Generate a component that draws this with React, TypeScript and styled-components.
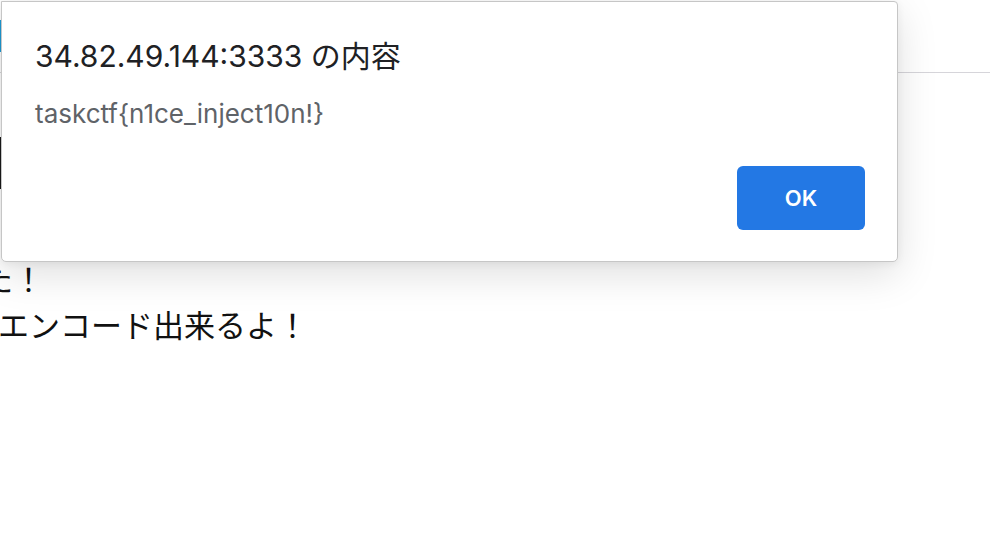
import styled, { createGlobalStyle } from 'styled-components'

const GlobalStyle = createGlobalStyle`
    html, body {
        margin: 0;
        padding: 0;
        background: #ffffff;
    }
    body {
        width: 990px;
        height: 534px;
        overflow: hidden;
        font-family: Inter, 'Noto Sans CJK JP', sans-serif;
    }
`

const FONT = `Inter, 'Noto Sans CJK JP', sans-serif`

export default function App() {
    return (
        <>
            <GlobalStyle />
            <Page>
                <Header>
                    <Logo />
                </Header>
                <Content>
                    <Heading />
                    <Line indent={-80}>できた！</Line>
                    <Line indent={-64}>全部エンコード出来るよ！</Line>
                </Content>
                <Dialog role="alertdialog">
                    <Title>34.82.49.144:3333 の内容</Title>
                    <Message>taskctf{'{'}n1ce_inject10n!{'}'}</Message>
                    <Actions>
                        <OkButton>OK</OkButton>
                    </Actions>
                </Dialog>
            </Page>
        </>
    )
}

const Page = styled.div`
    position: relative;
    width: 990px;
    height: 534px;
    overflow: hidden;
`

const Header = styled.header`
    height: 73px;
    border-bottom: 1.5px solid #d6d5da;
    display: flex;
    align-items: flex-start;
    padding-top: 20px;
    box-sizing: border-box;
`

const Logo = styled.div`
    width: 2px;
    height: 32px;
    background: #1e9bd6;
`

const Content = styled.main`
    display: flex;
    flex-direction: column;
    padding-top: 64px;
`

const Heading = styled.div`
    width: 2px;
    height: 52px;
    background: #1a1a1a;
    margin-bottom: 68px;
`

const Line = styled.p<{ indent: number }>`
    margin: 0 0 0 ${p => p.indent}px;
    font-family: ${FONT};
    font-size: 31px;
    line-height: 46px;
    color: #111111;
    white-space: nowrap;
`

const Dialog = styled.div`
    position: absolute;
    left: 1px;
    top: 1px;
    width: 897px;
    height: 261px;
    box-sizing: border-box;
    background: #ffffff;
    border: 1px solid #c6c6c6;
    border-radius: 0 4px 5px 5px;
    box-shadow: 0 12px 40px rgba(0, 0, 0, 0.13), 0 2px 8px rgba(0, 0, 0, 0.06);
    padding: 34px 32px 0 33px;
    display: flex;
    flex-direction: column;
`

const Title = styled.h1`
    margin: 0;
    font-family: ${FONT};
    font-weight: 400;
    font-size: 30px;
    line-height: 40px;
    color: #202124;
`

const Message = styled.div`
    margin-top: 21px;
    font-family: ${FONT};
    font-size: 26px;
    line-height: 34px;
    color: #5f6368;
`

const Actions = styled.div`
    display: flex;
    justify-content: flex-end;
    margin-top: 35px;
`

const OkButton = styled.button`
    width: 128px;
    height: 64px;
    border: none;
    border-radius: 6px;
    background: #2378e4;
    color: #ffffff;
    font-family: ${FONT};
    font-weight: 600;
    font-size: 22px;
    cursor: pointer;
`
